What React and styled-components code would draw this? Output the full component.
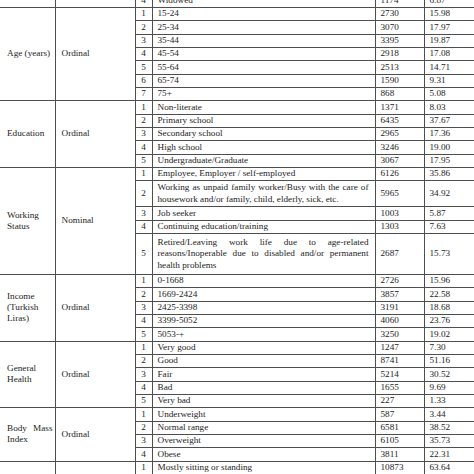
import React from "react";
import styled, { createGlobalStyle } from "styled-components";

const GlobalStyle = createGlobalStyle`
  html, body {
    margin: 0;
    padding: 0;
    background: #ffffff;
  }
`;

const Page = styled.div`
  width: 474px;
  height: 474px;
  overflow: hidden;
  background: #fff;
`;

const Table = styled.table`
  table-layout: fixed;
  border-collapse: collapse;
  width: 484px;
  margin-top: -6.3px;
  font-family: "Liberation Serif", "Times New Roman", serif;
  font-size: 9.2px;
  color: #1c1c1c;
`;

const Col = styled.col`
  width: ${(p) => p.$w}px;
`;

const Row = styled.tr`
  height: ${(p) => p.$h}px;
`;

const Cell = styled.td`
  border: 1px solid #4e4e4e;
  padding: 0 ${(p) => p.$pr ?? 4}px 0 ${(p) => p.$pl ?? 5}px;
  vertical-align: middle;
  line-height: 11.4px;
  text-align: ${(p) => p.$align || "left"};
  white-space: nowrap;
  overflow: hidden;
`;

const LabelCell = styled(Cell)`
  border-left: none;
  text-align: justify;
  white-space: normal;
`;

const TypeCell = styled(Cell)`
  border-left-color: #b0b0b0;
`;

const TextCell = styled(Cell)`
  white-space: normal;
`;

const Line = styled.span`
  display: block;
  text-align: ${(p) => (p.$justify ? "justify" : "left")};
  text-align-last: ${(p) => (p.$justify ? "justify" : "left")};
`;

const groups = [
  { label: "", type: "", items: [[4, ["Widowed"], 1174, "6.87"]] },
  {
    label: "Age (years)",
    type: "Ordinal",
    items: [
      [1, ["15-24"], 2730, "15.98"],
      [2, ["25-34"], 3070, "17.97"],
      [3, ["35-44"], 3395, "19.87"],
      [4, ["45-54"], 2918, "17.08"],
      [5, ["55-64"], 2513, "14.71"],
      [6, ["65-74"], 1590, "9.31"],
      [7, ["75+"], 868, "5.08"],
    ],
  },
  {
    label: "Education",
    type: "Ordinal",
    items: [
      [1, ["Non-literate"], 1371, "8.03"],
      [2, ["Primary school"], 6435, "37.67"],
      [3, ["Secondary school"], 2965, "17.36"],
      [4, ["High school"], 3246, "19.00"],
      [5, ["Undergraduate/Graduate"], 3067, "17.95"],
    ],
  },
  {
    label: "Working Status",
    type: "Nominal",
    items: [
      [1, ["Employee, Employer / self-employed"], 6126, "35.86"],
      [
        2,
        [
          "Working as unpaid family worker/Busy with the care of",
          "housework and/or family, child, elderly, sick, etc.",
        ],
        5965,
        "34.92",
      ],
      [3, ["Job seeker"], 1003, "5.87"],
      [4, ["Continuing education/training"], 1303, "7.63"],
      [
        5,
        [
          "Retired/Leaving work life due to age-related",
          "reasons/Inoperable due to disabled and/or permanent",
          "health problems",
        ],
        2687,
        "15.73",
      ],
    ],
  },
  {
    label: "Income (Turkish Liras)",
    type: "Ordinal",
    items: [
      [1, ["0-1668"], 2726, "15.96"],
      [2, ["1669-2424"], 3857, "22.58"],
      [3, ["2425-3398"], 3191, "18.68"],
      [4, ["3399-5052"], 4060, "23.76"],
      [5, ["5053-+"], 3250, "19.02"],
    ],
  },
  {
    label: "General Health",
    type: "Ordinal",
    items: [
      [1, ["Very good"], 1247, "7.30"],
      [2, ["Good"], 8741, "51.16"],
      [3, ["Fair"], 5214, "30.52"],
      [4, ["Bad"], 1655, "9.69"],
      [5, ["Very bad"], 227, "1.33"],
    ],
  },
  {
    label: "Body Mass Index",
    type: "Ordinal",
    items: [
      [1, ["Underweight"], 587, "3.44"],
      [2, ["Normal range"], 6581, "38.52"],
      [3, ["Overweight"], 6105, "35.73"],
      [4, ["Obese"], 3811, "22.31"],
    ],
  },
  { label: "", type: "", items: [[1, ["Mostly sitting or standing"], 10873, "63.64"]] },
];

const columns = [55, 80, 17, 223, 49, 60];

const rowHeight = (lines) => (lines === 1 ? 13.33 : lines === 2 ? 26 : 41);

const App = () => (
  <Page>
    <GlobalStyle />
    <Table>
      <colgroup>
        {columns.map((w, i) => (
          <Col key={i} $w={w} />
        ))}
      </colgroup>
      <tbody>
        {groups.map((g, gi) =>
          g.items.map(([n, lines, count, pct], i) => (
            <Row key={`${gi}-${i}`} $h={rowHeight(lines.length)}>
              {i === 0 && (
                <>
                  <LabelCell rowSpan={g.items.length} $pl={7} $pr={2}>
                    {g.label}
                  </LabelCell>
                  <TypeCell rowSpan={g.items.length} $pl={6}>
                    {g.type}
                  </TypeCell>
                </>
              )}
              <Cell $align="center" $pl={0} $pr={0}>
                {n}
              </Cell>
              <TextCell $pl={5} $pr={6}>
                {lines.map((l, li) => (
                  <Line key={li} $justify={lines.length > 1 && li < lines.length - 1}>
                    {l}
                  </Line>
                ))}
              </TextCell>
              <Cell $pl={5}>{count}</Cell>
              <Cell $pl={5}>{pct}</Cell>
            </Row>
          ))
        )}
      </tbody>
    </Table>
  </Page>
);

export default App;
